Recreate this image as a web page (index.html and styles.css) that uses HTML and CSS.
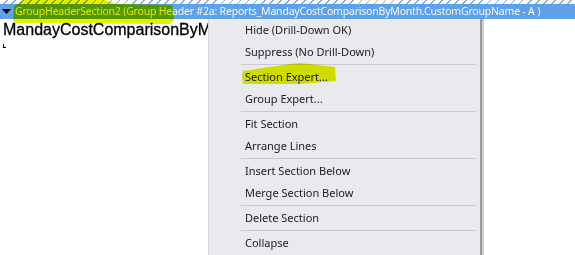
FILE: index.html
```html
<!DOCTYPE html>
<html>
<head>
<meta charset="utf-8">
<link rel="stylesheet" href="styles.css">
</head>
<body>
<div class="page">
  <div class="section-head">
    <div class="hatch"></div>
    <div class="band">
      <svg class="tri" width="9" height="5" viewBox="0 0 9 5"><polygon points="0,0 9,0 4.5,5" fill="#000"/></svg>
      <span class="title">GroupHeaderSection2 (Group Header #2a: Reports_MandayCostComparisonByMonth.CustomGroupName - A )</span>
    </div>
  </div>
  <div class="content">
    <div class="field">MandayCostComparisonByMonth</div>
    <div class="corner"></div>
  </div>

  <svg class="mark mark-head" width="180" height="26" viewBox="0 0 180 26">
    <polygon points="14,6 24,0 105,0 116,4 172,5 174,20 170,24 16,23 13,20" fill="#e4f000"/>
  </svg>

  <div class="menu">
    <div class="item">Hide (Drill-Down OK)</div>
    <div class="item">Suppress (No Drill-Down)</div>
    <div class="sep"></div>
    <div class="item">Section Expert...</div>
    <div class="item">Group Expert...</div>
    <div class="sep"></div>
    <div class="item">Fit Section</div>
    <div class="item">Arrange Lines</div>
    <div class="sep"></div>
    <div class="item">Insert Section Below</div>
    <div class="item">Merge Section Below</div>
    <div class="sep"></div>
    <div class="item">Delete Section</div>
    <div class="sep"></div>
    <div class="item">Collapse</div>
  </div>

  <svg class="mark mark-menu" width="100" height="24" viewBox="0 0 100 24">
    <polygon points="1,8 28,4 48,1 58,0 93,4 94,18 58,21 1,21 0,13" fill="#e4f000"/>
  </svg>
</div>
</body>
</html>
```

FILE: styles.css
```css
html, body {
  margin: 0;
  padding: 0;
  background: #fff;
}
.page {
  position: relative;
  width: 575px;
  height: 255px;
  overflow: hidden;
}
.section-head {
  display: flex;
  flex-direction: column;
}
.hatch {
  height: 4px;
  background: repeating-linear-gradient(135deg, #fff 0px, #fff 4.5px, #7eaee8 4.5px, #7eaee8 5.7px);
}
.band {
  height: 15px;
  background: #5fa0ea;
  display: flex;
  align-items: center;
  padding-left: 2px;
  gap: 4px;
  white-space: nowrap;
}
.tri {
  display: block;
  flex: none;
}
.title {
  font-family: "Noto Sans", sans-serif;
  font-size: 10.5px;
  letter-spacing: -0.2px;
  color: #f4f8ff;
  line-height: 15px;
}
.content {
  padding: 2px 0 0 3px;
  display: flex;
  flex-direction: column;
}
.field {
  font-family: "Liberation Sans", Arial, sans-serif;
  font-size: 16px;
  line-height: 18px;
  color: #000;
  white-space: nowrap;
  -webkit-text-stroke: 0.3px #000;
}
.corner {
  margin-top: 5px;
  width: 2px;
  height: 3px;
  border-left: 1px solid #000;
  border-bottom: 1px solid #000;
}
.mark {
  position: absolute;
  mix-blend-mode: multiply;
  pointer-events: none;
}
.mark-head {
  left: 0;
  top: 0;
}
.menu {
  position: absolute;
  left: 208px;
  top: 19px;
  width: 271px;
  height: 240px;
  background: #e9eaed;
  border-left: 1px solid #d3d4d8;
  box-shadow: 2px 0 0 #9c9c9c, 4px 0 0 #cdcdcd;
  display: flex;
  flex-direction: column;
  font-family: "Noto Sans", sans-serif;
  font-size: 11px;
  color: #1a1a1a;
}
.item {
  height: 22px;
  line-height: 22px;
  padding-left: 36px;
  white-space: nowrap;
}
.sep {
  height: 1px;
  margin: 1px 4px 1px 32px;
  background: #c9c9ce;
}
.mark-menu {
  left: 242px;
  top: 63px;
}
```
